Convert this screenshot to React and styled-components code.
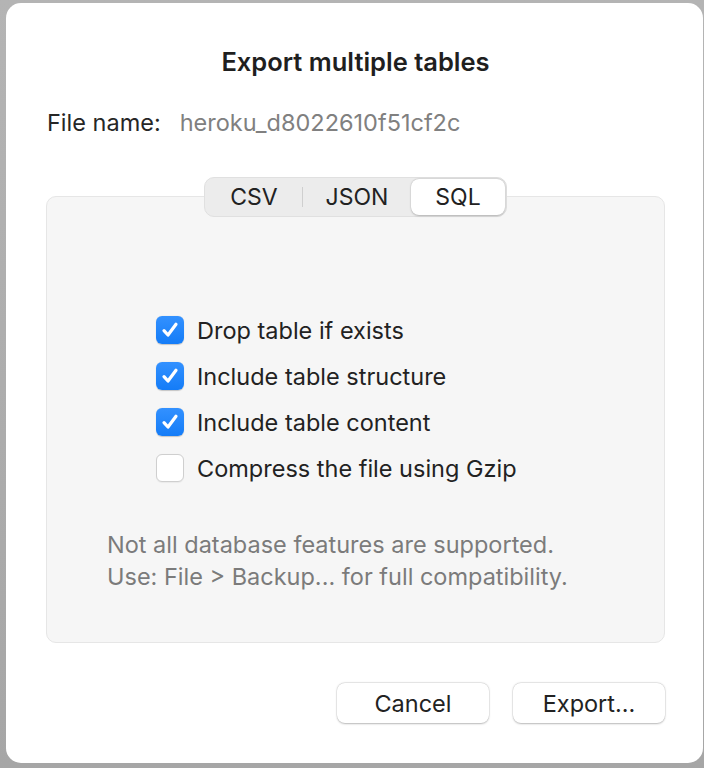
import React, { useState } from "react";
import styled, { createGlobalStyle } from "styled-components";

const GlobalStyle = createGlobalStyle`
  html, body {
    margin: 0;
    padding: 0;
    background: #a9a9a9;
    font-family: "Inter", "Liberation Sans", sans-serif;
  }
  * { box-sizing: border-box; }
`;

const Backdrop = styled.div`
  width: 704px;
  height: 768px;
  padding: 3px 1px 5px 6px;
  background: linear-gradient(#b4b4b4, #a6a6a6);
`;

const Dialog = styled.div`
  height: 100%;
  background: #fff;
  border-radius: 15px;
  display: flex;
  flex-direction: column;
  padding: 43px 38px 40px 40px;
  color: #222;
`;

const Title = styled.h1`
  margin: 0;
  text-align: center;
  font-size: 25.5px;
  font-weight: 600;
  color: #1f1f1f;
`;

const FileRow = styled.div`
  display: flex;
  align-items: baseline;
  gap: 19px;
  margin-top: 31px;
  padding-left: 1px;
  font-size: 23.5px;
`;

const FileLabel = styled.span`
  color: #262626;
`;

const FileValue = styled.span`
  color: #808080;
`;

const Section = styled.div`
  margin-top: 40px;
  display: flex;
  flex-direction: column;
  align-items: center;
`;

const Segmented = styled.div`
  position: relative;
  z-index: 1;
  display: flex;
  align-items: center;
  height: 40px;
  padding: 1px;
  background: #ececec;
  border: 1px solid #e0e0e0;
  border-radius: 10px;
`;

const Segment = styled.button`
  height: 100%;
  width: ${(p) => p.w}px;
  border: 0;
  border-radius: 8px;
  font-family: inherit;
  font-size: 23px;
  color: #222;
  background: ${(p) => (p.active ? "#fff" : "transparent")};
  box-shadow: ${(p) =>
    p.active ? "0 0.5px 2px rgba(0,0,0,0.22), 0 0 0 0.5px rgba(0,0,0,0.06)" : "none"};
  cursor: pointer;
`;

const Divider = styled.span`
  width: 1px;
  height: 20px;
  background: ${(p) => (p.hidden ? "transparent" : "#cfcfcf")};
`;

const Panel = styled.div`
  align-self: stretch;
  margin-top: -21px;
  height: 447px;
  background: #f6f6f6;
  border: 1px solid #e6e6e6;
  border-radius: 10px;
  padding: 119px 0 0 60px;
`;

const Options = styled.div`
  display: flex;
  flex-direction: column;
  gap: 18px;
  padding-left: 49px;
`;

const Option = styled.label`
  display: flex;
  align-items: center;
  gap: 13px;
  height: 28px;
  font-size: 23.5px;
  color: #222;
  cursor: pointer;
`;

const Box = styled.span`
  flex: none;
  width: 28px;
  height: 28px;
  border-radius: 6px;
  display: flex;
  align-items: center;
  justify-content: center;
  background: ${(p) => (p.checked ? "linear-gradient(#3391ff, #147cf7)" : "#fff")};
  border: ${(p) => (p.checked ? "none" : "1px solid #cfcfcf")};
  box-shadow: ${(p) => (p.checked ? "0 0.5px 1px rgba(0,0,0,0.2)" : "0 0.5px 1px rgba(0,0,0,0.05)")};
`;

const Note = styled.p`
  margin: 47px 0 0;
  font-size: 23.5px;
  line-height: 32px;
  color: #7b7b7b;
`;

const Footer = styled.div`
  margin-top: auto;
  display: flex;
  justify-content: flex-end;
  gap: 24px;
`;

const Button = styled.button`
  width: 152px;
  height: 40px;
  border: 0;
  border-radius: 8px;
  background: #fff;
  font-family: inherit;
  font-size: 23.5px;
  color: #222;
  box-shadow: 0 0.5px 2px rgba(0,0,0,0.25), 0 0 0 0.5px rgba(0,0,0,0.08);
  cursor: pointer;
`;

function Check() {
  return (
    <svg width="22" height="22" viewBox="0 0 22 22">
      <path d="M5 11.6 L9 16 L17 5.2" fill="none" stroke="#fff" strokeWidth="3.2" strokeLinecap="round" strokeLinejoin="round" />
    </svg>
  );
}

const formats = [
  { name: "CSV", w: 96 },
  { name: "JSON", w: 108 },
  { name: "SQL", w: 94 },
];

export default function App() {
  const [format, setFormat] = useState("SQL");
  const [opts, setOpts] = useState([
    { label: "Drop table if exists", on: true },
    { label: "Include table structure", on: true },
    { label: "Include table content", on: true },
    { label: "Compress the file using Gzip", on: false },
  ]);

  function toggle(i) {
    setOpts(opts.map((o, j) => (j === i ? { ...o, on: !o.on } : o)));
  }

  const activeIndex = formats.findIndex((f) => f.name === format);

  return (
    <>
      <GlobalStyle />
      <Backdrop>
        <Dialog>
          <Title>Export multiple tables</Title>
          <FileRow>
            <FileLabel>File name:</FileLabel>
            <FileValue>heroku_d8022610f51cf2c</FileValue>
          </FileRow>
          <Section>
            <Segmented>
              {formats.map((f, i) => (
                <React.Fragment key={f.name}>
                  {i > 0 && <Divider hidden={i === activeIndex || i - 1 === activeIndex} />}
                  <Segment w={f.w} active={f.name === format} onClick={() => setFormat(f.name)}>
                    {f.name}
                  </Segment>
                </React.Fragment>
              ))}
            </Segmented>
            <Panel>
              <Options>
                {opts.map((o, i) => (
                  <Option key={o.label} onClick={() => toggle(i)}>
                    <Box checked={o.on}>{o.on && <Check />}</Box>
                    {o.label}
                  </Option>
                ))}
              </Options>
              <Note>
                Not all database features are supported.
                <br />
                Use: File &gt; Backup... for full compatibility.
              </Note>
            </Panel>
          </Section>
          <Footer>
            <Button>Cancel</Button>
            <Button>Export...</Button>
          </Footer>
        </Dialog>
      </Backdrop>
    </>
  );
}
